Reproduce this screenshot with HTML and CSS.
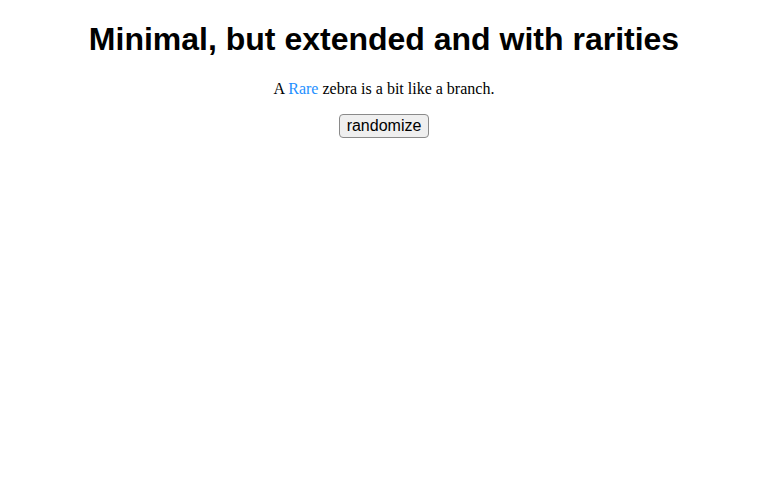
FILE: index.html
```html
<!DOCTYPE html>
<html>
<head>
<meta charset="utf-8">
<link rel="stylesheet" href="styles.css">
</head>
<body>
<main class="app">
  <h1 class="title">Minimal, but extended and with rarities</h1>
  <p class="sentence">A <span class="rarity">Rare</span> zebra is a bit like a branch.</p>
  <button class="randomize">randomize</button>
</main>
</body>
</html>
```
FILE: styles.css
```css
html, body {
  background: #ffffff;
}
body {
  margin: 0 8px 8px;
  font-family: "Liberation Serif", serif;
  font-size: 16px;
  color: #000;
}
.app {
  text-align: center;
}
.title {
  font-family: "Liberation Sans", Arial, sans-serif;
  font-size: 32px;
  font-weight: bold;
  margin: 21.44px 0;
}
.sentence {
  margin: 16px 0;
}
.rarity {
  color: #1e90ff;
}
.randomize {
  font-family: "Liberation Sans", Arial, sans-serif;
  font-size: 16px;
  padding: 2px 7px;
  border: 1px solid #8a8a8a;
  border-radius: 4px;
  background: #efefef;
  color: #000;
}
```
